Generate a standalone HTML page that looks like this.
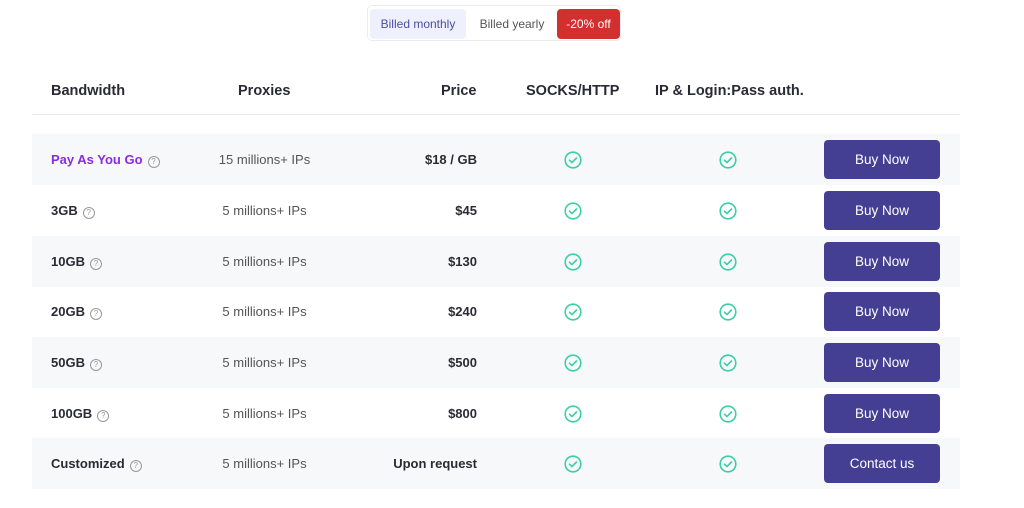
<!DOCTYPE html>
<html><head><style>
body{margin:0;width:1024px;height:508px;background:#fff;font-family:"Liberation Sans",sans-serif;position:relative;overflow:hidden;color:#2b2b33}
.tog{position:absolute;left:367px;top:5px;width:254px;height:36px;border:1px solid #ececf0;border-radius:5px;box-sizing:border-box}
.tog div{position:absolute;top:3px;height:30px;line-height:30px;font-size:12px;text-align:center;border-radius:4px}
.hd{position:absolute;top:83px;font-size:14.5px;font-weight:bold;color:#2a2a35}
.line{position:absolute;left:32px;top:114px;width:928px;height:1px;background:#e8e8ec}
.row{position:absolute;left:32px;width:928px;height:51px}
.row.g{background:#f7f8fa}
.c{position:absolute;top:0;line-height:51px;font-size:13px}
.b{left:19px;font-weight:bold;color:#2a2a35}
.q{display:inline-block;width:10px;height:10px;border:1px solid #999;border-radius:50%;font-size:8px;line-height:10px;text-align:center;color:#999;font-weight:normal;margin-left:5px;vertical-align:0px}
.p{left:140px;width:185px;text-align:center;color:#555}
.pr{right:483px;font-weight:bold}
.ck{position:absolute;top:17px}
.btn{position:absolute;left:792px;top:6px;width:116px;height:39px;background:#443f93;border-radius:4px;color:#fff;font-size:13.5px;text-align:center;line-height:39px}
</style></head><body>
<div class="tog">
<div style="left:2px;width:96px;background:#eef0fd;color:#4b4f9e">Billed monthly</div>
<div style="left:100px;width:88px;color:#555">Billed yearly</div>
<div style="left:189px;width:63px;background:#d2302f;color:#fff">-20% off</div>
</div>
<div class="hd" style="left:51px">Bandwidth</div>
<div class="hd" style="left:238px">Proxies</div>
<div class="hd" style="left:441px">Price</div>
<div class="hd" style="left:526px">SOCKS/HTTP</div>
<div class="hd" style="left:655px">IP &amp; Login:Pass auth.</div>
<div class="line"></div>
<svg width="0" height="0" style="position:absolute"><defs><g id="ck"><circle cx="9" cy="9" r="7.8" fill="none" stroke="#3ccfa2" stroke-width="1.6"/><path d="M5.5 9.2l2.4 2.4 4.6-4.6" fill="none" stroke="#3ccfa2" stroke-width="1.6" stroke-linecap="round" stroke-linejoin="round"/></g></defs></svg>
<div class="row g" style="top:134px"><div class="c b" style="color:#8a2be2">Pay As You Go<span class="q">?</span></div><div class="c p">15 millions+ IPs</div><div class="c pr">$18 / GB</div><svg class="ck" style="left:532px" width="18" height="18"><use href="#ck"/></svg><svg class="ck" style="left:687px" width="18" height="18"><use href="#ck"/></svg><div class="btn">Buy Now</div></div>
<div class="row" style="top:185px"><div class="c b">3GB<span class="q">?</span></div><div class="c p">5 millions+ IPs</div><div class="c pr">$45</div><svg class="ck" style="left:532px" width="18" height="18"><use href="#ck"/></svg><svg class="ck" style="left:687px" width="18" height="18"><use href="#ck"/></svg><div class="btn">Buy Now</div></div>
<div class="row g" style="top:236px"><div class="c b">10GB<span class="q">?</span></div><div class="c p">5 millions+ IPs</div><div class="c pr">$130</div><svg class="ck" style="left:532px" width="18" height="18"><use href="#ck"/></svg><svg class="ck" style="left:687px" width="18" height="18"><use href="#ck"/></svg><div class="btn">Buy Now</div></div>
<div class="row" style="top:286px"><div class="c b">20GB<span class="q">?</span></div><div class="c p">5 millions+ IPs</div><div class="c pr">$240</div><svg class="ck" style="left:532px" width="18" height="18"><use href="#ck"/></svg><svg class="ck" style="left:687px" width="18" height="18"><use href="#ck"/></svg><div class="btn">Buy Now</div></div>
<div class="row g" style="top:337px"><div class="c b">50GB<span class="q">?</span></div><div class="c p">5 millions+ IPs</div><div class="c pr">$500</div><svg class="ck" style="left:532px" width="18" height="18"><use href="#ck"/></svg><svg class="ck" style="left:687px" width="18" height="18"><use href="#ck"/></svg><div class="btn">Buy Now</div></div>
<div class="row" style="top:388px"><div class="c b">100GB<span class="q">?</span></div><div class="c p">5 millions+ IPs</div><div class="c pr">$800</div><svg class="ck" style="left:532px" width="18" height="18"><use href="#ck"/></svg><svg class="ck" style="left:687px" width="18" height="18"><use href="#ck"/></svg><div class="btn">Buy Now</div></div>
<div class="row g" style="top:438px"><div class="c b">Customized<span class="q">?</span></div><div class="c p">5 millions+ IPs</div><div class="c pr">Upon request</div><svg class="ck" style="left:532px" width="18" height="18"><use href="#ck"/></svg><svg class="ck" style="left:687px" width="18" height="18"><use href="#ck"/></svg><div class="btn">Contact us</div></div>
</body></html>
